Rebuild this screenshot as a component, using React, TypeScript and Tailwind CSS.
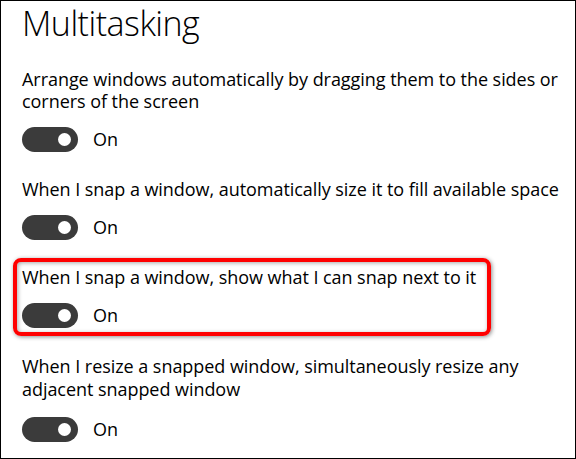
import React from "react";

function Toggle({ className = "" }: { className?: string }) {
  return (
    <div className={`flex items-center ${className}`}>
      <div className="relative h-[25px] w-[56px] rounded-full bg-[#3b3b3b]">
        <div className="absolute right-[7px] top-[6px] h-[13px] w-[13px] rounded-full bg-white" />
      </div>
      <span className="ml-[15px] text-[18px] leading-[25px] text-black">On</span>
    </div>
  );
}

export default function App() {
  return (
    <div className="relative h-[459px] w-[576px] overflow-hidden border border-black bg-white pl-[21px] font-['Open_Sans',sans-serif] text-black">
      <h1 className="h-[44px] text-[34px] font-light leading-[44px] tracking-[-0.5px]">Multitasking</h1>

      <div className="mt-[23px] w-[548px]">
        <p className="text-[18px] leading-[22px] tracking-[-0.05px]">
          Arrange windows automatically by dragging them to the sides or corners of the screen
        </p>
        <Toggle className="mt-[15px]" />
      </div>

      <div className="mt-[26px] w-[548px]">
        <p className="text-[18px] leading-[22px] tracking-[-0.05px]">
          When I snap a window, automatically size it to fill available space
        </p>
        <Toggle className="mt-[15px]" />
      </div>

      <div className="relative mt-[26px] w-[548px]">
        <div className="pointer-events-none absolute left-[-9px] top-[-8px] h-[78px] w-[478px] rounded-[8px] border-[4px] border-[#ff0000] shadow-[1px_1px_4px_rgba(0,0,0,0.45),inset_1px_1px_4px_rgba(0,0,0,0.35)]" />
        <p className="text-[18px] leading-[22px] tracking-[-0.05px]">
          When I snap a window, show what I can snap next to it
        </p>
        <Toggle className="mt-[15px]" />
      </div>

      <div className="mt-[27px] w-[548px]">
        <p className="text-[18px] leading-[23px] tracking-[-0.05px]">
          When I resize a snapped window, simultaneously resize any adjacent snapped window
        </p>
        <Toggle className="mt-[16px]" />
      </div>
    </div>
  );
}
